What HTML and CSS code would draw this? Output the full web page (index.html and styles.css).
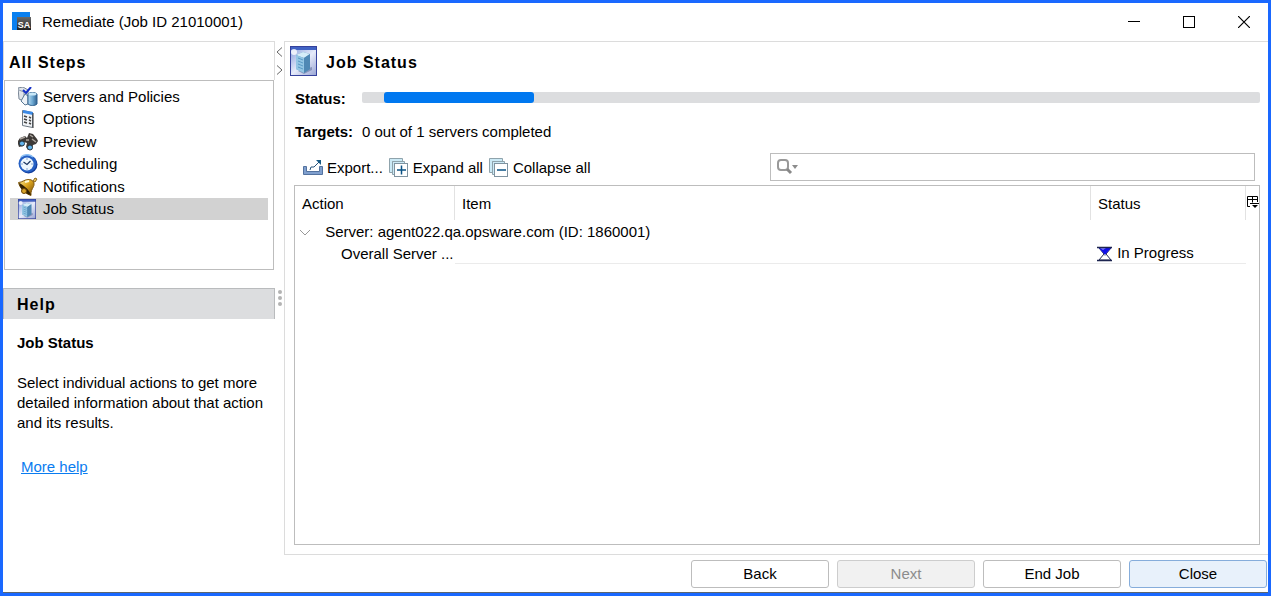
FILE: index.html
```html
<!DOCTYPE html>
<html lang="en">
<head>
    <title>Remediate (Job ID 21010001)</title>
    <meta charset="UTF-8">
    <meta name="viewport" content="width=device-width, initial-scale=1.0">
    <link rel="stylesheet" href="styles.css">
</head>
<body>
    <!-- server in a blue frame, used twice -->
    <svg width="0" height="0" class="defs" aria-hidden="true">
        <defs>
            <linearGradient id="frame" x1="0" y1="0" x2="1" y2="1">
                <stop offset="0" stop-color="#8fa4de"/>
                <stop offset="0.5" stop-color="#e6ebfa"/>
                <stop offset="1" stop-color="#9aa6d4"/>
            </linearGradient>
            <linearGradient id="steel" x1="0" y1="0" x2="1" y2="0">
                <stop offset="0" stop-color="#b9dcf2"/>
                <stop offset="0.5" stop-color="#6ea9d2"/>
                <stop offset="1" stop-color="#2f618f"/>
            </linearGradient>
            <linearGradient id="gold" x1="0" y1="0" x2="1" y2="1">
                <stop offset="0" stop-color="#fff0a0"/>
                <stop offset="0.45" stop-color="#dca51e"/>
                <stop offset="1" stop-color="#6b4305"/>
            </linearGradient>
            <linearGradient id="dark" x1="0" y1="0" x2="0" y2="1">
                <stop offset="0" stop-color="#6a6a6a"/>
                <stop offset="1" stop-color="#222"/>
            </linearGradient>
            <symbol id="job" viewBox="0 0 27 30" preserveAspectRatio="none">
                <rect width="27" height="30" fill="#35429c"/>
                <rect x="1" y="1" width="25" height="3" fill="#4163c4"/>
                <rect x="1" y="4" width="25" height="25" fill="url(#frame)"/>
                <circle cx="4" cy="6" r="3" fill="#fff" opacity="0.8"/>
                <path d="M8 25l6 3 8-4v-3z" fill="#66739f" opacity="0.6"/>
                <path d="M6 9l7-3 7 2v15l-6 4-8-4z" fill="#5d96c0"/>
                <path d="M6 9l7-3 7 2-6 4z" fill="#d5edf8"/>
                <path d="M6 9l8 3v15l-8-4z" fill="#94c6e4"/>
                <path d="M14 12l6-4v15l-6 4z" fill="#4f88b4"/>
                <path d="M8 12l5 2M8 15l5 2M8 18l5 2M8 21l5 2" stroke="#5a9ac6"/>
            </symbol>
        </defs>
    </svg>

    <div class="window">
        <header class="titlebar">
            <svg class="app-icon" width="20" height="20" viewBox="0 0 20 20" aria-hidden="true">
                <path d="M0 0h18v5H5v13H0z" fill="#0a80f0"/>
                <rect x="5" y="5" width="14" height="13" fill="url(#dark)"/>
                <text x="12" y="15.500" class="logo-text" text-anchor="middle">SA</text>
            </svg>
            <h1>Remediate (Job ID 21010001)</h1>
            <div class="controls">
                <button type="button" aria-label="Minimize">
                    <svg width="12" height="12"><path d="M0 5.500h12" stroke="#000"/></svg>
                </button>
                <button type="button" aria-label="Maximize">
                    <svg width="12" height="12"><rect x="0.500" y="0.500" width="11" height="11" fill="none" stroke="#000"/></svg>
                </button>
                <button type="button" aria-label="Close window">
                    <svg width="12" height="12"><path d="M0 0l12 12M12 0L0 12" stroke="#000" stroke-width="1.200"/></svg>
                </button>
            </div>
        </header>

        <div class="content">
            <aside class="sidebar">
                <h2 class="steps-title">All Steps</h2>
                <nav class="steps">
                    <a href="#servers">
                        <svg width="20" height="20" viewBox="0 0 20 20" aria-hidden="true">
                            <path d="M0 1l5-1 5 3v8l-4 3-5-2z" fill="#dfe4ea" stroke="#7a8796"/>
                            <path d="M1 3l5 2v8" fill="none" stroke="#8d9aa8"/>
                            <path d="M5 3l3 3 5-6" fill="none" stroke="#1430c8" stroke-width="2"/>
                            <path d="M3 14l4 4 3-1V9L7 7z" fill="#edf2f7" stroke="#587894"/>
                            <path d="M10 7c2-2 7-2 9 0v10c-2 2-7 2-9 0z" fill="url(#steel)" stroke="#2f618f"/>
                            <ellipse cx="14.500" cy="7" rx="4" ry="1.500" fill="#c9e8f8"/>
                        </svg>
                        Servers and Policies
                    </a>
                    <a href="#options">
                        <svg width="20" height="20" viewBox="0 0 20 20" aria-hidden="true">
                            <path d="M4.500 1.500l10 2v15l-10-2z" fill="#f1f4f7" stroke="#6d7883"/>
                            <path d="M5 1l10 2v3L5 4z" fill="#3c8ae6"/>
                            <path d="M15 4v15" stroke="#333"/>
                            <path d="M6 7l3 1M6 10l3 1M6 13l3 1M11 8l2 1M11 11l2 1M11 14l2 1" stroke="#444" stroke-width="1.500"/>
                        </svg>
                        Options
                    </a>
                    <a href="#preview">
                        <svg width="20" height="20" viewBox="0 0 20 20" aria-hidden="true">
                            <path d="M0 9l2-3 5-2 2 2 2-5 4 1 4 5 1 2-2 3-3 1-1 4-4 1-2-3 1-4-3-1-1 4-4 1-1-3z" fill="#3e3a37"/>
                            <path d="M2 7l5-2M12 3l3 2M14 7l4 3M8 8h3" stroke="#aaa49d" stroke-width="1.500"/>
                            <circle cx="4" cy="11.500" r="2.500" fill="#62b5ee" stroke="#26353f"/>
                            <circle cx="12" cy="15.500" r="2.500" fill="#62b5ee" stroke="#26353f"/>
                        </svg>
                        Preview
                    </a>
                    <a href="#scheduling">
                        <svg width="20" height="20" viewBox="0 0 20 20" aria-hidden="true">
                            <circle cx="10.500" cy="10.500" r="9" fill="#123d9c"/>
                            <circle cx="9.500" cy="9.500" r="9" fill="#2560c4"/>
                            <path d="M3 3a9 9 0 0 1 12 0" fill="none" stroke="#8dc0f4" stroke-width="1.500"/>
                            <circle cx="9" cy="10" r="6.500" fill="#eef7fd"/>
                            <path d="M9 4.500v1M9 14.500v1M3.500 10h1M13.500 10h1" stroke="#2b5ba8"/>
                            <path d="M5.500 8L9 10.500L12.500 7" fill="none" stroke="#1c355f" stroke-width="1.200"/>
                        </svg>
                        Scheduling
                    </a>
                    <a href="#notifications">
                        <svg width="20" height="20" viewBox="0 0 20 20" aria-hidden="true">
                            <path d="M15 4l2-3 2 1-2 3z" fill="#f0cc60" stroke="#8b6519"/>
                            <path d="M0.500 5.500c4 0 6-3.500 11-3 4 .5 5.500 4 4 7-1.500 3-3 5-2.500 9C8 17 2 12 .5 5.500z" fill="url(#gold)" stroke="#80560a"/>
                            <path d="M1 6c3 1 10 6 12 12C7 17 2 12 1 6z" fill="#302003"/>
                            <circle cx="6" cy="14" r="2.500" fill="#d9a52b" stroke="#6b4305"/>
                            <path d="M7 5l4-1" stroke="#fffbd8" stroke-width="2"/>
                        </svg>
                        Notifications
                    </a>
                    <a href="#status" class="selected" aria-current="step">
                        <svg width="20" height="20" viewBox="0 0 20 20" aria-hidden="true"><use href="#job" width="18" height="20"/></svg>
                        Job Status
                    </a>
                </nav>
                <h2 class="help-title">Help</h2>
                <div class="help">
                    <h3>Job Status</h3>
                    <p>Select individual actions to get more detailed information about that action and its results.</p>
                    <a href="#help">More help</a>
                </div>
            </aside>

            <div class="splitter">
                <div class="arrows">
                    <button type="button" aria-label="Collapse left">
                        <svg width="7" height="10"><path d="M6 0.500L1 5l5 4.500" fill="none" stroke="#666"/></svg>
                    </button>
                    <button type="button" aria-label="Collapse right">
                        <svg width="7" height="10"><path d="M1 0.500L6 5L1 9.500" fill="none" stroke="#666"/></svg>
                    </button>
                </div>
                <svg width="4" height="16" aria-hidden="true">
                    <circle cx="2" cy="2" r="2" fill="#b3b3b3"/>
                    <circle cx="2" cy="8" r="2" fill="#b3b3b3"/>
                    <circle cx="2" cy="14" r="2" fill="#b3b3b3"/>
                </svg>
            </div>

            <main class="panel">
                <div class="panel-title">
                    <svg width="27" height="30" aria-hidden="true"><use href="#job" width="27" height="30"/></svg>
                    <h2>Job Status</h2>
                </div>

                <dl class="summary">
                    <dt id="statusLabel">Status:</dt>
                    <dd><div class="progress" role="progressbar" aria-labelledby="statusLabel"><div class="progress-fill"></div></div></dd>
                    <dt>Targets:</dt>
                    <dd>0 out of 1 servers completed</dd>
                </dl>

                <div class="toolbar">
                    <button type="button">
                        <svg width="20" height="18" viewBox="0 0 20 18" aria-hidden="true">
                            <path d="M0.500 7.500h3v5h13v-5h3v8h-19z" fill="#7f9fce" stroke="#53729f"/>
                            <path d="M7 11l1-3 3 0 5-5" fill="none" stroke="#26527a"/>
                            <path d="M13 1h5v5z" fill="#175a86"/>
                        </svg>
                        Export...
                    </button>
                    <button type="button">
                        <svg width="20" height="20" viewBox="0 0 20 20" aria-hidden="true">
                            <path d="M0.500 14.500v-14h13v3h-10v11z" fill="#cceaf6" stroke="#8fa3ac"/>
                            <path d="M3.500 16.500v-13h12v3h-9v10z" fill="#cceaf6" stroke="#8fa3ac"/>
                            <rect x="5.500" y="5.500" width="13" height="13" fill="#fff" stroke="#7f93a0"/>
                            <path d="M8 12h9M12.500 7.500v9" stroke="#0a5284" stroke-width="1.500"/>
                        </svg>
                        Expand all
                    </button>
                    <button type="button">
                        <svg width="20" height="20" viewBox="0 0 20 20" aria-hidden="true">
                            <path d="M0.500 14.500v-14h13v3h-10v11z" fill="#cceaf6" stroke="#8fa3ac"/>
                            <path d="M3.500 16.500v-13h12v3h-9v10z" fill="#cceaf6" stroke="#8fa3ac"/>
                            <rect x="5.500" y="5.500" width="13" height="13" fill="#fff" stroke="#7f93a0"/>
                            <path d="M8 12h9" stroke="#0a5284" stroke-width="1.500"/>
                        </svg>
                        Collapse all
                    </button>
                    <label class="search">
                        <svg width="22" height="16" viewBox="0 0 22 16" aria-hidden="true">
                            <rect x="1" y="1" width="10" height="10" rx="3" fill="none" stroke="#999" stroke-width="2"/>
                            <path d="M10 10l4 4" stroke="#888" stroke-width="3"/>
                            <path d="M15 6h6l-3 4z" fill="#8c8c8c"/>
                        </svg>
                        <input type="text" aria-label="Search">
                    </label>
                </div>

                <div class="table-box">
                    <table>
                        <colgroup>
                            <col class="col-action">
                            <col>
                            <col class="col-status">
                            <col class="col-menu">
                        </colgroup>
                        <thead>
                            <tr>
                                <th>Action</th>
                                <th>Item</th>
                                <th>Status</th>
                                <td class="menu">
                                    <button type="button" aria-label="Choose columns">
                                        <svg width="12" height="12" viewBox="0 0 12 12">
                                            <path d="M3 10.500H0.500V0.500h10V6M0.500 3.500h10M5.500 0.500v6M3 7.500h9" fill="none" stroke="#000"/>
                                            <path d="M5 9h6l-3 3z" fill="#000"/>
                                        </svg>
                                    </button>
                                </td>
                            </tr>
                        </thead>
                        <tbody>
                            <tr>
                                <td colspan="4" class="server">
                                    <button type="button" aria-label="Collapse server">
                                        <svg width="12" height="8"><path d="M1 1l5 5 5-5" fill="none" stroke="#999"/></svg>
                                    </button>
                                    Server: agent022.qa.opsware.com (ID: 1860001)
                                </td>
                            </tr>
                            <tr>
                                <td class="action">Overall Server ...</td>
                                <td class="line"></td>
                                <td class="line progress-state">
                                    <svg width="16" height="16" viewBox="0 0 16 16" aria-hidden="true">
                                        <path d="M2 2h12L9 8l5 6H2l5-6z" fill="#fff" stroke="#222a55"/>
                                        <path d="M2 2h12L8 9z" fill="#1010e8"/>
                                        <path d="M3 2h6L6 4z" fill="#8080ff"/>
                                        <path d="M0 1.500h15M0 14.500h15" stroke="#1c2450" stroke-width="1.500"/>
                                        <path d="M8 8v2" stroke="#8790b8"/>
                                    </svg>
                                    In Progress
                                </td>
                                <td></td>
                            </tr>
                        </tbody>
                    </table>
                </div>
            </main>
        </div>

        <footer class="buttons">
            <button type="button">Back</button>
            <button type="button" disabled>Next</button>
            <button type="button">End Job</button>
            <button type="button" class="default">Close</button>
        </footer>
    </div>
</body>
</html>
```

FILE: styles.css
```css
* {
    box-sizing: border-box;
}
body {
    margin: 0;
    font-family: "Liberation Sans", Arial, sans-serif;
    font-size: 15px;
    line-height: 20px;
    color: #000;
    background-color: #fff;
}
h1, h2, h3, p, dl, dd {
    margin: 0;
}
button {
    font: inherit;
    color: inherit;
    background: none;
    border: none;
    padding: 0;
}
svg {
    display: block;
    flex: none;
}
.defs {
    position: absolute;
}
.window {
    display: flex;
    flex-direction: column;
    min-height: 100vh;
    border: 3px solid #1a68ff;
}

/* title bar */
.titlebar {
    display: flex;
    align-items: center;
    height: 38px;
    padding-left: 9px;
}
.titlebar h1 {
    margin-left: 10px;
    font-size: 15px;
    font-weight: normal;
}
.logo-text {
    font-size: 9px;
    font-weight: bold;
    fill: #fff;
}
.controls {
    display: flex;
    margin-left: auto;
    padding-right: 18px;
    gap: 43px;
}

.content {
    display: flex;
    flex: 1;
}

/* left side */
.sidebar {
    width: 272px;
}
.sidebar h2, .panel h2 {
    font-size: 16px;
    letter-spacing: 1px;
}
.steps-title {
    height: 39px;
    padding: 11px 5px 0;
    border: 1px solid #dcdcdc;
    border-bottom: none;
}
.steps {
    display: grid;
    grid-template-rows: repeat(6, 1fr);
    height: 190px;
    margin: 0 1px;
    padding: 4px 5px 49px;
    border: 1px solid #bdbdbd;
}
.steps a {
    display: flex;
    align-items: center;
    gap: 5px;
    padding: 1px 0 0 8px;
    color: #000;
    text-decoration: none;
}
.steps a.selected {
    background-color: #d2d2d2;
}
.sidebar .help-title {
    margin-top: 18px;
    padding: 6px 13px 4px;
    border: 1px solid #b9bbbd;
    border-bottom: none;
    background-color: #dcdddf;
}
.help {
    padding: 14px 8px 14px 14px;
}
.help h3 {
    font-size: 15px;
}
.help p {
    margin: 20px 0 24px;
}
.help a {
    margin-left: 4px;
    color: #0a7cf0;
}

.splitter {
    display: grid;
    grid-template-rows: 1fr auto 1fr;
    justify-items: center;
    width: 9px;
}
.arrows {
    padding-top: 6px;
}
.arrows button {
    display: block;
    margin-bottom: 8px;
}

/* right side */
.panel {
    display: flex;
    flex-direction: column;
    flex: 1;
    min-width: 0;
    padding: 4px 8px 9px 9px;
    border: 1px solid #dcdcdc;
    border-right: none;
}
.panel-title {
    display: flex;
    align-items: center;
    gap: 9px;
    margin-left: -4px;
}
.panel h2 {
    padding-top: 3px;
}
.summary {
    display: grid;
    grid-template-columns: 67px 1fr;
    row-gap: 13px;
    margin-top: 13px;
    padding-left: 1px;
}
.summary dt {
    font-weight: bold;
}
.progress {
    height: 11px;
    margin-top: 3px;
    border-radius: 2px;
    background-color: #dcdddf;
}
.progress-fill {
    width: 150px;
    height: 11px;
    margin-left: 22px;
    border-radius: 3px;
    background-color: #0078f0;
}
.toolbar {
    display: flex;
    align-items: center;
    gap: 6px;
    margin: 11px 5px 4px 9px;
}
.toolbar button {
    display: flex;
    align-items: center;
    gap: 4px;
    padding-top: 2px;
}
.search {
    display: flex;
    align-items: center;
    width: 485px;
    height: 28px;
    margin-left: auto;
    padding: 0 6px;
    border: 1px solid #bdbdbd;
}
.search input {
    flex: 1;
    min-width: 0;
    border: none;
    outline: none;
    font: inherit;
}
.table-box {
    flex: 1;
    border: 1px solid #bdbdbd;
}
table {
    width: 100%;
    table-layout: fixed;
    border-collapse: separate;
    border-spacing: 0;
}
.col-action {
    width: 160px;
}
.col-status {
    width: 155px;
}
.col-menu {
    width: 13px;
}
th, td {
    padding: 0 7px;
    text-align: left;
    font-weight: normal;
    white-space: nowrap;
}
th {
    height: 34px;
    padding-top: 2px;
    border-right: 1px solid #e2e2e2;
}
.menu {
    padding: 0 1px;
}
tbody td {
    height: 22px;
    padding-top: 1px;
}
.server {
    padding-left: 4px;
}
.server button {
    display: inline-block;
    margin-right: 10px;
    vertical-align: middle;
}
.action {
    padding-left: 46px;
    padding-right: 0;
}
.line {
    border-bottom: 1px solid #ebebeb;
}
.progress-state {
    padding-left: 6px;
}
.progress-state svg {
    display: inline-block;
    vertical-align: middle;
}

/* bottom buttons */
.buttons {
    display: flex;
    justify-content: flex-end;
    gap: 8px;
    padding: 5px 1px 4px;
    border-bottom: 1px solid #5c6670;
}
.buttons button {
    width: 138px;
    height: 28px;
    border: 1px solid #bdbdbd;
    border-radius: 3px;
    background-color: #fff;
}
.buttons button:disabled {
    color: #8c8c8c;
    border-color: #cdcdcd;
    background-color: #f1f1f1;
}
.buttons .default {
    border-color: #86addb;
    background-color: #e8f1fb;
}
```
